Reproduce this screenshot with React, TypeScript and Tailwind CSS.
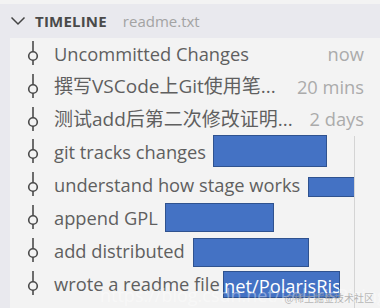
import React from 'react';

type Row = {
  label: string;
  time?: string;
  cjk?: boolean;
  box?: { left: number; top: number; width: number; height: number; text?: string };
};

const rows: Row[] = [
  { label: 'Uncommitted Changes', time: 'now' },
  { label: '撰写VSCode上Git使用笔...', time: '20 mins', cjk: true },
  { label: '测试add后第二次修改证明...', time: '2 days', cjk: true },
  { label: 'git tracks changes', box: { left: 213, top: -1, width: 114, height: 32 } },
  { label: 'understand how stage works', box: { left: 308, top: 8, width: 47, height: 20 } },
  { label: 'append GPL', box: { left: 165, top: 1, width: 109, height: 29 } },
  { label: 'add distributed', box: { left: 193, top: 3, width: 116, height: 29 } },
  { label: 'wrote a readme file', box: { left: 223, top: 4, width: 117, height: 27, text: 'net/PolarisRising' } },
];

function CommitIcon() {
  return (
    <svg width="14" height="26" viewBox="0 0 14 26" className="shrink-0">
      <line x1="7" y1="1" x2="7" y2="12" stroke="#4a4a4a" strokeWidth="1.6" />
      <line x1="7" y1="20" x2="7" y2="25" stroke="#4a4a4a" strokeWidth="1.6" />
      <circle cx="7" cy="16" r="4.3" fill="none" stroke="#4a4a4a" strokeWidth="1.6" />
    </svg>
  );
}

export default function App() {
  return (
    <div
      className="relative w-[380px] h-[308px] overflow-hidden bg-[#f3f3f3]"
      style={{ fontFamily: '"Open Sans", "Noto Sans CJK SC", sans-serif' }}
    >
      <div className="h-[4px] bg-[#f3f3f3]" />
      <div className="h-[33.5px] bg-[#e9e9ee] flex items-center">
        <svg width="16" height="10" viewBox="0 0 16 10" className="ml-[10px]">
          <path d="M1.5 1.5 L8 8 L14.5 1.5" fill="none" stroke="#444" strokeWidth="1.5" />
        </svg>
        <span className="ml-[9px] text-[15px] font-bold tracking-[0.2px] text-[#4a4a4a]">TIMELINE</span>
        <span className="ml-[16px] text-[15px] text-[#a3a3a3]">readme.txt</span>
      </div>
      <div className="flex">
        <div className="w-[10px] bg-[#e9e9ee] h-[270px]" />
        <div className="relative flex-1 flex flex-col">
          {rows.map((r) => (
            <div key={r.label} className="relative h-[32.85px] flex items-center">
              <div className="ml-[16px] mt-[-2px]">
                <CommitIcon />
              </div>
              <span
                className={
                  'ml-[14px] text-[#5f5f5f] whitespace-nowrap leading-none ' +
                  (r.cjk ? 'text-[19px]' : 'text-[18.3px]')
                }
              >
                {r.label}
              </span>
              {r.time && (
                <span className="ml-auto mr-[16px] text-[18.3px] text-[#ababab] whitespace-nowrap leading-none">{r.time}</span>
              )}
              {r.box && (
                <div
                  className="absolute bg-[#4472c4] border border-[#2f528f] flex items-end overflow-hidden"
                  style={{ left: r.box.left - 10, top: r.box.top, width: r.box.width, height: r.box.height }}
                >
                  {r.box.text && (
                    <span className="text-[18.3px] text-white leading-none whitespace-nowrap pb-[2px]">{r.box.text}</span>
                  )}
                </div>
              )}
            </div>
          ))}
          <div className="absolute left-[344px] top-[98px] bottom-0 w-px bg-[#d4d4d4]" />
        </div>
      </div>
      <span className="absolute left-[100px] top-[282px] text-[18px] text-white/40 whitespace-nowrap pointer-events-none">
        https://blog.csdn.net/PolarisRisingWar
      </span>
      <span
        className="absolute right-[6px] bottom-[3px] text-[10px] text-[#9a9a9a]/70 whitespace-nowrap"
        style={{ fontFamily: '"Noto Sans CJK SC", sans-serif' }}
      >
        @稀土掘金技术社区
      </span>
    </div>
  );
}
